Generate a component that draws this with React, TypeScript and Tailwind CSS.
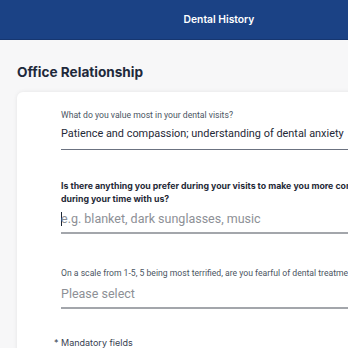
import React from "react";

export default function App() {
  return (
    <div className="w-[348px] h-[348px] overflow-hidden bg-[#f7f7f8]" style={{ fontFamily: "Inter, 'Noto Sans', sans-serif" }}>
      <div className="w-[438px]">
        <header className="h-[40px] bg-[#1b4285] border-b border-[#163670] flex items-center justify-center pt-[1px]">
          <span className="text-white text-[10.3px] font-semibold">Dental History</span>
        </header>
        <div className="pl-[17px] pt-[22px]">
          <h1 className="text-[13.6px] leading-[20px] font-bold text-[#1e293b]">Office Relationship</h1>
          <div className="mt-[10px] bg-white rounded-[6px] shadow-[0_0_4px_rgba(0,0,0,0.08)] pl-[44px] pt-[16px] pb-[20px]">
            <div className="flex flex-col">
              <label className="text-[8.65px] leading-[14px] text-[#4b5563]" style={{ fontFamily: "Roboto, 'Liberation Sans', sans-serif" }}>What do you value most in your dental visits?</label>
              <div className="mt-[2px] text-[10.9px] leading-[20px] text-[#1f2937] pb-[5px] border-b border-[#6b7280]" style={{ fontFamily: "Roboto, 'Liberation Sans', sans-serif" }}>
                Patience and compassion; understanding of dental anxiety
              </div>
            </div>
            <div className="flex flex-col mt-[30px]">
              <label className="text-[8.75px] leading-[13px] font-bold text-[#1f2937]">
                Is there anything you prefer during your visits to make you more comfortable<br />during your time with us?
              </label>
              <div className="mt-[3px] text-[12.5px] leading-[20px] text-[#8d9096] pb-[3px] border-b-2 border-[#a3a6ab] flex items-center" style={{ fontFamily: "Roboto, 'Liberation Sans', sans-serif" }}>
                <span className="inline-block w-[1px] h-[14px] bg-[#1f2937] mr-[-1px]"></span>
                e.g. blanket, dark sunglasses, music
              </div>
            </div>
            <div className="flex flex-col mt-[32px]">
              <label className="text-[8.65px] leading-[14px] text-[#4b5563]" style={{ fontFamily: "Roboto, 'Liberation Sans', sans-serif" }}>On a scale from 1-5, 5 being most terrified, are you fearful of dental treatment?</label>
              <div className="mt-[4px] text-[12.5px] leading-[20px] text-[#8d9096] pb-[3px] border-b-2 border-[#a3a6ab]" style={{ fontFamily: "Roboto, 'Liberation Sans', sans-serif" }}>
                Please select
              </div>
            </div>
            <div className="ml-[-7px] mt-[27px] text-[9px] leading-[14px] text-[#374151]">* Mandatory fields</div>
          </div>
        </div>
      </div>
    </div>
  );
}
